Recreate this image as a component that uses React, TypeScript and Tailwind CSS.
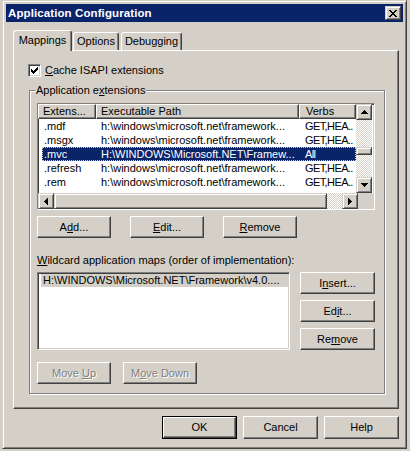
import React from "react";

const raised =
  "border border-t-white border-l-white border-r-[#404040] border-b-[#404040] shadow-[inset_-1px_-1px_0_#808080]";
const raisedSb =
  "border border-t-[#d4d0c8] border-l-[#d4d0c8] border-r-[#404040] border-b-[#404040] shadow-[inset_1px_1px_0_#ffffff,inset_-1px_-1px_0_#808080]";
const sunken =
  "border border-t-[#808080] border-l-[#808080] border-r-white border-b-white shadow-[inset_1px_1px_0_#404040,inset_-1px_-1px_0_#d4d0c8]";
const dither =
  "bg-[image:repeating-conic-gradient(#d4d0c8_0%_25%,#ffffff_0%_50%)] bg-[length:2px_2px]";

function U({ children }: { children: React.ReactNode }) {
  return <span className="underline decoration-1 underline-offset-[1px]">{children}</span>;
}

function Btn({
  className,
  children,
  disabled = false,
  isDefault = false,
}: {
  className: string;
  children: React.ReactNode;
  disabled?: boolean;
  isDefault?: boolean;
}) {
  const face = (
    <div
      className={`flex-1 flex items-center justify-center ${raised} ${
        disabled ? "text-[#808080] [text-shadow:1px_1px_0_#ffffff]" : "text-black"
      }`}
    >
      <span>{children}</span>
    </div>
  );
  return (
    <div className={`${className} flex ${isDefault ? "border border-black" : ""}`}>{face}</div>
  );
}

function Arrow({ dir }: { dir: "up" | "down" | "left" | "right" }) {
  const paths: Record<string, string> = {
    up: "M3 0h1v1h-1z M2 1h3v1h-3z M1 2h5v1h-5z M0 3h7v1h-7z",
    down: "M0 0h7v1h-7z M1 1h5v1h-5z M2 2h3v1h-3z M3 3h1v1h-1z",
    left: "M3 0h1v7h-1z M2 1h1v5h-1z M1 2h1v3h-1z M0 3h1v1h-1z",
    right: "M0 0h1v7h-1z M1 1h1v5h-1z M2 2h1v3h-1z M3 3h1v1h-1z",
  };
  const vert = dir === "up" || dir === "down";
  return (
    <div className={`w-[16px] h-[16px] shrink-0 flex items-center justify-center bg-[#d4d0c8] ${raisedSb}`}>
      <svg
        width={vert ? 7 : 4}
        height={vert ? 4 : 7}
        viewBox={vert ? "0 0 7 4" : "0 0 4 7"}
        shapeRendering="crispEdges"
      >
        <path d={paths[dir]} fill="#000" />
      </svg>
    </div>
  );
}

const rows: [string, string, string, boolean][] = [
  [".mdf", "h:\\windows\\microsoft.net\\framework...", "GET,HEA..", false],
  [".msgx", "h:\\windows\\microsoft.net\\framework...", "GET,HEA..", false],
  [".mvc", "H:\\WINDOWS\\Microsoft.NET\\Framew...", "All", true],
  [".refresh", "h:\\windows\\microsoft.net\\framework...", "GET,HEA..", false],
  [".rem", "h:\\windows\\microsoft.net\\framework...", "GET,HEA..", false],
];

export default function App() {
  return (
    <div className="w-[410px] h-[451px] bg-[#d4d0c8] overflow-hidden pl-[2px] font-['Tahoma','Liberation_Sans',Arial,sans-serif] text-[11px] leading-[13px] text-black">
      {/* window */}
      <div className="w-[405px] h-[449px] bg-[#d4d0c8] border border-t-[#d4d0c8] border-l-[#d4d0c8] border-r-[#404040] border-b-[#404040] shadow-[inset_1px_1px_0_#ffffff,inset_-1px_-1px_0_#808080] p-[3px] flex flex-col">
        {/* title bar */}
        <div className="h-[18px] shrink-0 bg-[#0a246a] flex items-center justify-between pl-[2px] pr-[2px]">
          <span className="text-white font-bold text-[11.5px] leading-[14px] tracking-[0.1px]">
            Application Configuration
          </span>
          <div className={`w-[16px] h-[14px] bg-[#d4d0c8] flex items-center justify-center ${raisedSb}`}>
            <svg width="8" height="7" viewBox="0 0 8 7" shapeRendering="crispEdges">
              <path
                d="M0 0h2v1h-2z M6 0h2v1h-2z M1 1h2v1h-2z M5 1h2v1h-2z M2 2h4v1h-4z M3 3h2v1h-2z M2 4h4v1h-4z M1 5h2v1h-2z M5 5h2v1h-2z M0 6h2v1h-2z M6 6h2v1h-2z"
                fill="#000"
              />
            </svg>
          </div>
        </div>

        {/* body */}
        <div className="flex-1 flex flex-col pl-[7px] pr-[4px]">
          {/* tabs */}
          <div className="flex items-end h-[21px] mt-[8px] relative z-10">
            <div className="w-[59px] h-[21px] bg-[#d4d0c8] border-l border-t border-r border-l-white border-t-white border-r-[#404040] shadow-[inset_-1px_0_0_#808080] rounded-t-[3px] flex items-center justify-center pb-[1px]">
              Mappings
            </div>
            <div className="ml-[1px] mb-[1px] w-[46px] h-[18px] bg-[#d4d0c8] border-l border-t border-r border-l-white border-t-white border-r-[#404040] shadow-[inset_-1px_0_0_#808080] rounded-t-[3px] flex items-center justify-center">
              Options
            </div>
            <div className="ml-[2px] mb-[1px] w-[61px] h-[18px] bg-[#d4d0c8] border-l border-t border-r border-l-white border-t-white border-r-[#404040] shadow-[inset_-1px_0_0_#808080] rounded-t-[3px] flex items-center justify-center">
              Debugging
            </div>
          </div>

          {/* tab pane */}
          <div className="-mt-[1px] w-[386px] h-[359px] shrink-0 border border-t-white border-l-white border-r-[#404040] border-b-[#404040] shadow-[inset_-1px_-1px_0_#808080] pl-[14px] pt-[13px] flex flex-col">
            {/* checkbox */}
            <div className="flex items-center h-[13px]">
              <div className={`w-[13px] h-[13px] bg-white flex items-center justify-center ${sunken}`}>
                <svg width="7" height="7" viewBox="0 0 7 7" shapeRendering="crispEdges">
                  <path
                    d="M6 0h1v1h-1z M5 1h2v1h-2z M0 2h1v1h-1z M4 2h3v1h-3z M0 3h2v1h-2z M3 3h3v1h-3z M0 4h5v1h-5z M1 5h3v1h-3z M2 6h1v1h-1z"
                    fill="#000"
                  />
                </svg>
              </div>
              <span className="ml-[4px]">
                <U>C</U>ache ISAPI extensions
              </span>
            </div>

            {/* group box */}
            <div className="relative ml-[1px] mt-[13px] w-[356px] h-[304px] border border-[#808080] shadow-[1px_1px_0_#ffffff,inset_1px_1px_0_#ffffff] pl-[7px] pt-[12px] flex flex-col">
              <span className="absolute left-[5px] -top-[7px] px-[1px] bg-[#d4d0c8] leading-[13px]">
                Application e<U>x</U>tensions
              </span>

              {/* list view */}
              <div className={`w-[338px] h-[107px] bg-white flex flex-col ${sunken}`}>
                <div className="flex flex-1 min-h-0">
                  <div className="w-[318px] flex flex-col">
                    {/* header */}
                    <div className="flex h-[15px] shrink-0">
                      <div className={`w-[58px] bg-[#d4d0c8] pl-[4px] flex items-center ${raised}`}>Extens...</div>
                      <div className={`w-[203px] bg-[#d4d0c8] pl-[4px] flex items-center ${raised}`}>Executable Path</div>
                      <div className={`w-[57px] bg-[#d4d0c8] pl-[6px] flex items-center ${raised}`}>Verbs</div>
                    </div>
                    {rows.map(([ext, path, verbs, sel]) => (
                      <div key={ext} className="h-[14px] flex pl-[4px]">
                        <div
                          className={`flex flex-1 items-center whitespace-nowrap ${
                            sel
                              ? "bg-[#0a246a] text-white outline outline-1 outline-dotted outline-[#d8d4a0] -outline-offset-1"
                              : ""
                          }`}
                        >
                          <div className="w-[54px] pl-[2px] overflow-hidden">{ext}</div>
                          <div className="w-[203px] pl-[5px] overflow-hidden">{path}</div>
                          <div className="w-[57px] pl-[6px] tracking-[-0.6px]">{verbs}</div>
                        </div>
                      </div>
                    ))}
                  </div>
                  {/* vertical scrollbar */}
                  <div className="w-[16px] flex flex-col">
                    <Arrow dir="up" />
                    <div className={`flex-1 flex flex-col ${dither}`}>
                      <div className="h-[27px]" />
                      <div className={`h-[8px] bg-[#d4d0c8] ${raisedSb}`} />
                    </div>
                    <Arrow dir="down" />
                  </div>
                </div>
                {/* horizontal scrollbar */}
                <div className="h-[16px] flex shrink-0">
                  <Arrow dir="left" />
                  <div className={`w-[273px] bg-[#d4d0c8] ${raisedSb}`} />
                  <div className={`flex-1 ${dither}`} />
                  <Arrow dir="right" />
                  <div className="w-[16px] bg-[#d4d0c8]" />
                </div>
              </div>

              {/* add edit remove */}
              <div className="flex gap-[19px] mt-[6px]">
                <Btn className="w-[74px] h-[22px]">
                  A<U>d</U>d...
                </Btn>
                <Btn className="w-[74px] h-[22px]">
                  <U>E</U>dit...
                </Btn>
                <Btn className="w-[74px] h-[22px]">
                  <U>R</U>emove
                </Btn>
              </div>

              <div className="mt-[16px] h-[13px]">
                <U>W</U>ildcard application maps (order of implementation):
              </div>

              <div className="flex mt-[5px]">
                <div className={`w-[253px] h-[78px] bg-white pt-[1px] pl-[3px] ${sunken}`}>
                  <div className="h-[13px] bg-[#d4d0c8] pl-[2px] flex items-center whitespace-nowrap">
                    H:\WINDOWS\Microsoft.NET\Framework\v4.0....
                  </div>
                </div>
                <div className="ml-[10px] flex flex-col gap-[6px]">
                  <Btn className="w-[75px] h-[22px]">
                    I<U>n</U>sert...
                  </Btn>
                  <Btn className="w-[75px] h-[22px]">
                    Ed<U>i</U>t...
                  </Btn>
                  <Btn className="w-[75px] h-[22px]">
                    Re<U>m</U>ove
                  </Btn>
                </div>
              </div>

              <div className="flex gap-[12px] mt-[12px]">
                <Btn className="w-[74px] h-[22px]" disabled>
                  Move <U>U</U>p
                </Btn>
                <Btn className="w-[74px] h-[22px]" disabled>
                  M<U>o</U>ve Down
                </Btn>
              </div>
            </div>
          </div>

          {/* dialog buttons */}
          <div className="flex justify-end gap-[6px] mt-[7px]">
            <Btn className="w-[75px] h-[23px]" isDefault>
              OK
            </Btn>
            <Btn className="w-[75px] h-[23px]">Cancel</Btn>
            <Btn className="w-[75px] h-[23px]">Help</Btn>
          </div>
        </div>
      </div>
    </div>
  );
}
